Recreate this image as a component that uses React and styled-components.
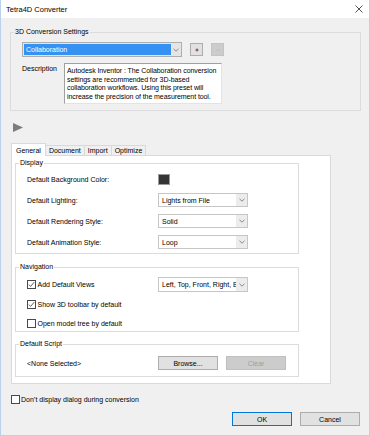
import React from "react";
import styled, { createGlobalStyle } from "styled-components";

const GlobalStyle = createGlobalStyle`
  html, body {
    margin: 0;
    padding: 0;
    background: #f0f0f0;
  }
  body {
    font-family: "Liberation Sans", Arial, sans-serif;
    font-size: 7px;
    color: #000;
  }
  * {
    box-sizing: border-box;
  }
`;

const Window = styled.div`
  width: 370px;
  height: 436px;
  display: flex;
  flex-direction: column;
  background: #f0f0f0;
  border: 1px solid #b9d1ea;
  border-top: none;
  overflow: hidden;
`;

const TitleBar = styled.div`
  height: 18px;
  flex: none;
  background: #fff;
  display: flex;
  align-items: center;
  justify-content: space-between;
  padding: 0 6px 0 5px;
  font-size: 7.5px;
`;

const Body = styled.div`
  display: flex;
  flex-direction: column;
  padding: 9px 8px 0 9px;
`;

const Group = styled.fieldset`
  margin: ${(p) => p.$mt || 0}px 0 0 0;
  padding: 0;
  border: 1px solid #dcdcdc;
  min-width: 0;
  width: ${(p) => (p.$w ? `${p.$w}px` : "auto")};
`;

const Legend = styled.legend`
  margin-left: 3px;
  padding: 0 1px;
  height: 10px;
  line-height: 10px;
`;

const GroupBody = styled.div`
  display: flex;
  flex-direction: column;
  gap: ${(p) => p.$gap || 0}px;
  padding: ${(p) => p.$pad};
`;

const Row = styled.div`
  display: flex;
  align-items: ${(p) => p.$align || "center"};
  gap: ${(p) => p.$gap || 0}px;
  height: ${(p) => (p.$h ? `${p.$h}px` : "auto")};
`;

const Combo = styled.div`
  width: 160px;
  height: 15px;
  display: flex;
  border: 1px solid #adadad;
  background: #e5e5e5;
`;

const ComboValue = styled.div`
  flex: 1;
  margin: 1px 0 1px 1px;
  background: #3592f2;
  color: #fff;
  padding-left: 2px;
  line-height: 11px;
`;

const Arrow = styled.div`
  width: ${(p) => p.$w || 10}px;
  display: flex;
  align-items: center;
  justify-content: center;
  background: ${(p) => p.$bg || "transparent"};
`;

const SmallButton = styled.div`
  width: 13px;
  height: 13px;
  display: flex;
  align-items: center;
  justify-content: center;
  border: 1px solid ${(p) => (p.$disabled ? "#c4c4c4" : "#adadad")};
  background: ${(p) => (p.$disabled ? "#cccccc" : "#e1e1e1")};
`;

const DescLabel = styled.div`
  width: 42px;
  padding-top: 1px;
  line-height: 9px;
`;

const DescBox = styled.div`
  width: 158px;
  height: 41px;
  background: #fff;
  border: 1px solid;
  border-color: #a0a0a0 #e3e3e3 #e3e3e3 #a0a0a0;
  padding: 3px 1px 0 2px;
  line-height: 8.6px;
  letter-spacing: -0.08px;
  white-space: pre;
  overflow: hidden;
`;

const Play = styled.div`
  margin: 12px 0 0 3px;
  height: 9px;
  display: flex;
`;

const TabStrip = styled.div`
  margin: 11px 0 0 1px;
  height: 12px;
  display: flex;
  align-items: flex-end;
  position: relative;
  z-index: 1;
`;

const Tab = styled.div`
  height: ${(p) => (p.$active ? 13 : 10)}px;
  margin-bottom: ${(p) => (p.$active ? -1 : 0)}px;
  padding: 0 ${(p) => (p.$active ? 4 : 3)}px;
  display: flex;
  align-items: center;
  background: ${(p) => (p.$active ? "#fff" : "#f0f0f0")};
  border: 1px solid #d9d9d9;
  border-bottom: none;
  margin-left: ${(p) => (p.$first ? 0 : -1)}px;
`;

const Panel = styled.div`
  margin-left: 1px;
  width: 320px;
  height: 229px;
  background: #fff;
  border: 1px solid #d9d9d9;
  padding: 2px 0 0 3px;
  display: flex;
  flex-direction: column;
`;

const FieldLabel = styled.div`
  width: 131px;
  flex: none;
  display: flex;
  align-items: center;
  gap: 1.5px;
`;

const Swatch = styled.div`
  width: 12px;
  height: 11px;
  background: #353535;
  border: 1px solid #9a9a9a;
`;

const Select = styled.div`
  width: 90px;
  height: ${(p) => p.$h || 14}px;
  display: flex;
  border: 1px solid #c6c6c6;
  background: #fff;
`;

const SelectValue = styled.div`
  flex: 1;
  min-width: 0;
  padding-left: 3px;
  display: flex;
  align-items: center;
  overflow: hidden;
  white-space: nowrap;
`;

const Box = styled.div`
  width: 9px;
  height: 9px;
  flex: none;
  border: 1px solid #4a4a4a;
  background: #fff;
  display: flex;
  align-items: center;
  justify-content: center;
`;

const Button = styled.div`
  width: 60px;
  height: 14px;
  display: flex;
  align-items: center;
  justify-content: center;
  background: ${(p) => (p.$disabled ? "#cccccc" : "#e1e1e1")};
  border: 1px solid
    ${(p) => (p.$primary ? "#0078d7" : p.$disabled ? "#bfbfbf" : "#adadad")};
  color: ${(p) => (p.$disabled ? "#a0a0a0" : "#000")};
`;

const ButtonPair = styled.div`
  display: flex;
  gap: 8px;
`;

const FooterCheck = styled.div`
  margin: 10px 0 0 1px;
  height: 10px;
  display: flex;
  align-items: center;
  gap: 1px;
`;

const Actions = styled.div`
  margin-top: 8px;
  padding-right: 1px;
  display: flex;
  justify-content: flex-end;
  gap: 8px;
`;

const Chevron = () => (
  <svg width="6" height="4" viewBox="0 0 6 4">
    <path d="M0.5 0.8 L3 3.2 L5.5 0.8" fill="none" stroke="#707070" strokeWidth="0.8" />
  </svg>
);

const Check = () => (
  <svg width="7" height="7" viewBox="0 0 7 7">
    <path d="M0.8 3.6 L2.6 5.4 L6.2 1.2" fill="none" stroke="#333" strokeWidth="0.8" />
  </svg>
);

const Checkbox = ({ checked }) => <Box>{checked && <Check />}</Box>;

const Dropdown = ({ value, h }) => (
  <Select $h={h}>
    <SelectValue>{value}</SelectValue>
    <Arrow $w={11} $bg="#ececec">
      <Chevron />
    </Arrow>
  </Select>
);

const displayRows = [
  ["Default Lighting:", "Lights from File"],
  ["Default Rendering Style:", "Solid"],
  ["Default Animation Style:", "Loop"],
];

const description = [
  "Autodesk Inventor : The Collaboration conversion",
  "settings are recommended for 3D-based",
  "collaboration workflows. Using this preset will",
  "increase the precision of the measurement tool.",
].join("\n");

export default function App() {
  return (
    <>
      <GlobalStyle />
      <Window>
        <TitleBar>
          <span>Tetra4D Converter</span>
          <svg width="8" height="8" viewBox="0 0 8 8">
            <path d="M0.5 0.5 L7.5 7.5 M7.5 0.5 L0.5 7.5" stroke="#222" strokeWidth="0.8" />
          </svg>
        </TitleBar>
        <Body>
          <Group>
            <Legend>3D Conversion Settings</Legend>
            <GroupBody $pad="5px 0 6px 11px" $gap={6}>
              <Row $gap={8}>
                <Combo>
                  <ComboValue>Collaboration</ComboValue>
                  <Arrow>
                    <Chevron />
                  </Arrow>
                </Combo>
                <SmallButton>
                  <svg width="4" height="4" viewBox="0 0 4 4">
                    <path d="M2 0.5 V3.5 M0.5 2 H3.5" stroke="#6b2a35" strokeWidth="0.9" />
                  </svg>
                </SmallButton>
                <SmallButton $disabled>
                  <svg width="4" height="4" viewBox="0 0 4 4">
                    <path d="M0.5 2 H3.5" stroke="#b8b8b8" strokeWidth="0.9" />
                  </svg>
                </SmallButton>
              </Row>
              <Row $align="flex-start">
                <DescLabel>Description</DescLabel>
                <DescBox>{description}</DescBox>
              </Row>
            </GroupBody>
          </Group>

          <Play>
            <svg width="10" height="9" viewBox="0 0 10 9">
              <path d="M0 0 L10 4.5 L0 9 Z" fill="#7c7c7c" />
            </svg>
          </Play>

          <TabStrip>
            <Tab $active $first>General</Tab>
            <Tab>Document</Tab>
            <Tab>Import</Tab>
            <Tab>Optimize</Tab>
          </TabStrip>
          <Panel>
            <Group $w={284}>
              <Legend>Display</Legend>
              <GroupBody $pad="4px 0 4px 11px" $gap={7}>
                <Row $h={14}>
                  <FieldLabel>Default Background Color:</FieldLabel>
                  <Swatch />
                </Row>
                {displayRows.map(([label, value]) => (
                  <Row $h={14} key={label}>
                    <FieldLabel>{label}</FieldLabel>
                    <Dropdown value={value} />
                  </Row>
                ))}
              </GroupBody>
            </Group>

            <Group $w={284} $mt={8}>
              <Legend>Navigation</Legend>
              <GroupBody $pad="5px 0 1px 11px" $gap={5}>
                <Row $h={15}>
                  <FieldLabel>
                    <Checkbox checked />
                    Add Default Views
                  </FieldLabel>
                  <Dropdown value="Left, Top, Front, Right, Bottom, Back" h={15} />
                </Row>
                <Row $h={14}>
                  <FieldLabel>
                    <Checkbox checked />
                    Show 3D toolbar by default
                  </FieldLabel>
                </Row>
                <Row $h={14}>
                  <FieldLabel>
                    <Checkbox />
                    Open model tree by default
                  </FieldLabel>
                </Row>
              </GroupBody>
            </Group>

            <Group $w={284} $mt={7}>
              <Legend>Default Script</Legend>
              <GroupBody $pad="7px 0 6px 11px">
                <Row $h={14}>
                  <FieldLabel>&lt;None Selected&gt;</FieldLabel>
                  <ButtonPair>
                    <Button>Browse...</Button>
                    <Button $disabled>Clear</Button>
                  </ButtonPair>
                </Row>
              </GroupBody>
            </Group>
          </Panel>

          <FooterCheck>
            <Checkbox />
            Don’t display dialog during conversion
          </FooterCheck>

          <Actions>
            <Button $primary>OK</Button>
            <Button>Cancel</Button>
          </Actions>
        </Body>
      </Window>
    </>
  );
}
